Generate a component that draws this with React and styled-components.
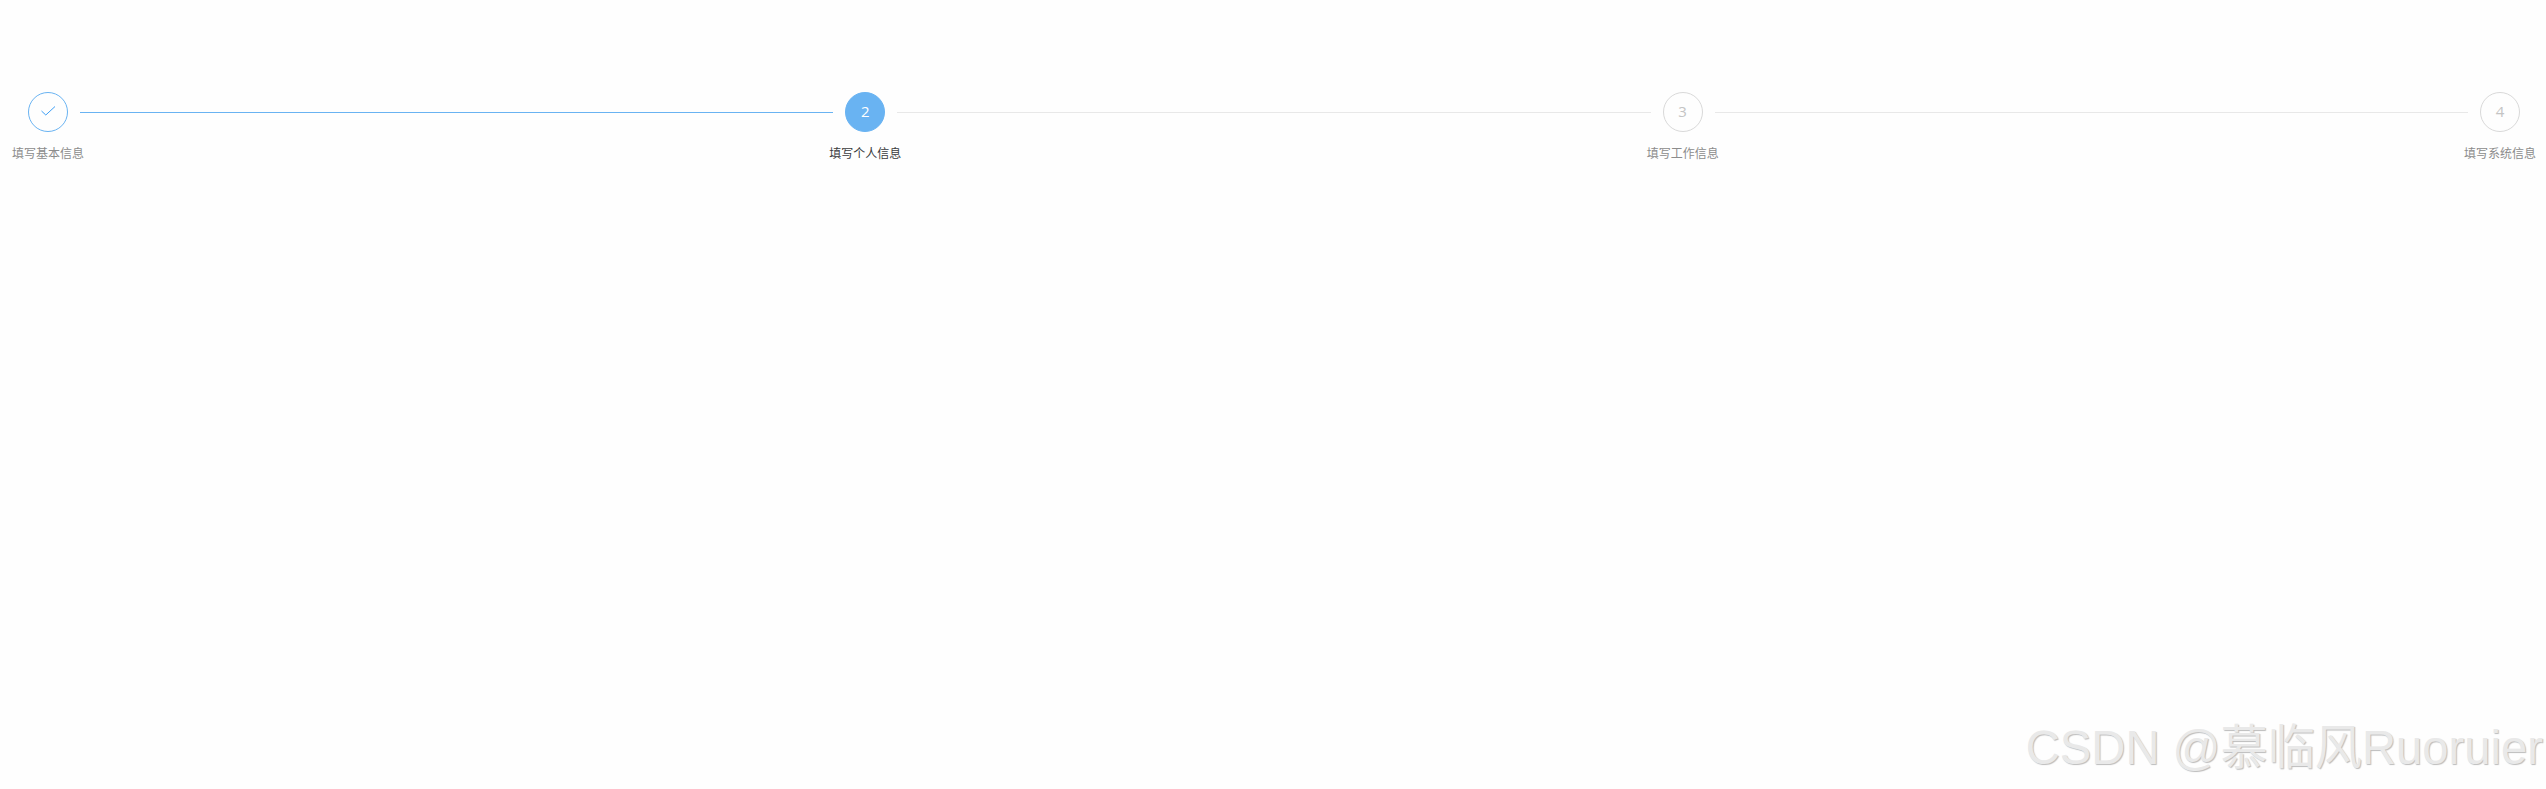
import styled, { createGlobalStyle } from 'styled-components';

const steps = [
  { label: '填写基本信息', status: 'done' },
  { label: '填写个人信息', status: 'active' },
  { label: '填写工作信息', status: 'todo' },
  { label: '填写系统信息', status: 'todo' },
];

export default function App() {
  return (
    <Page>
      <GlobalStyle />
      <StepsRow>
        {steps.map((step, i) => (
          <StepItem key={step.label} step={step} index={i} last={i === steps.length - 1} />
        ))}
      </StepsRow>
      <Watermark>CSDN @慕临风Ruoruier</Watermark>
    </Page>
  );
}

function StepItem({ step, index, last }) {
  return (
    <>
      <Step>
        <Circle $status={step.status}>
          {step.status === 'done' ? (
            <svg width="15" height="10" viewBox="0 0 15 10" fill="none">
              <path d="M0.5 5 L4.8 9 L14 0.5" stroke="#3f9ff5" strokeWidth="1" />
            </svg>
          ) : (
            index + 1
          )}
        </Circle>
        <Label $status={step.status}>{step.label}</Label>
      </Step>
      {!last && <Line $done={step.status === 'done'} />}
    </>
  );
}

const GlobalStyle = createGlobalStyle`
  html, body {
    margin: 0;
    padding: 0;
    background: #ffffff;
  }
`;

const Page = styled.div`
  position: relative;
  width: 2546px;
  height: 789px;
  overflow: hidden;
  background: #fefefe;
  font-family: 'Liberation Sans', 'Noto Sans CJK SC', sans-serif;
`;

const StepsRow = styled.div`
  display: flex;
  align-items: flex-start;
  padding: 92px 26px 0 28px;
`;

const Step = styled.div`
  display: flex;
  flex-direction: column;
  align-items: center;
  flex: 0 0 40px;
  width: 40px;
`;

const Circle = styled.div`
  box-sizing: border-box;
  width: 40px;
  height: 40px;
  padding-bottom: 2px;
  border-radius: 50%;
  display: flex;
  align-items: center;
  justify-content: center;
  font-family: 'Open Sans', sans-serif;
  font-size: 15px;
  border: 1px solid ${p => (p.$status === 'todo' ? '#d9d9d9' : '#69b3f2')};
  background: ${p => (p.$status === 'active' ? '#69b3f2' : 'transparent')};
  color: ${p => (p.$status === 'active' ? '#ffffff' : '#c4c4c4')};
`;

const Label = styled.div`
  margin-top: 12px;
  font-family: 'Noto Sans CJK SC', sans-serif;
  font-size: 12px;
  line-height: 18px;
  white-space: nowrap;
  color: ${p => (p.$status === 'active' ? '#3a3b3d' : '#8c8c8c')};
`;

const Line = styled.div`
  flex: 1;
  height: 1px;
  margin: 20px 12px 0;
  background: ${p => (p.$done ? '#69b3f2' : '#e8e8e8')};
`;

const Watermark = styled.div`
  position: absolute;
  right: 3px;
  bottom: 11px;
  font-family: 'Liberation Sans', 'Noto Sans CJK SC', sans-serif;
  font-size: 47.2px;
  line-height: 60px;
  white-space: nowrap;
  color: #e9e9e9;
  text-shadow: 1px 1px 1px #bcbcbc;
`;
